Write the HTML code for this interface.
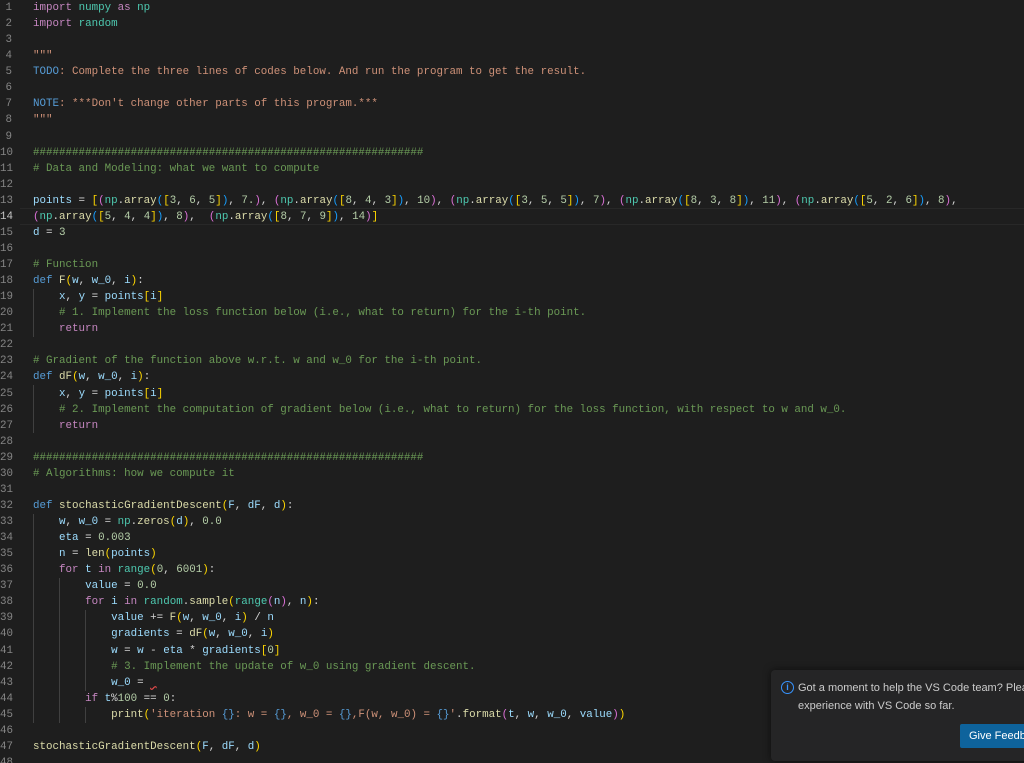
<!DOCTYPE html>
<html><head><meta charset="utf-8"><style>
html,body{margin:0;padding:0;background:#1e1e1e;width:1024px;height:763px;overflow:hidden;position:relative}
#wrap{position:absolute;left:0;top:0;width:1024px;height:763px;overflow:hidden}
pre{margin:0;font-family:"Liberation Mono",monospace;font-size:10.85px;line-height:16.07px;position:absolute;top:0}
#nums{left:0;width:12px;text-align:right;color:#858585}
#code{left:33px;color:#d4d4d4}
.k{color:#c586c0}.d{color:#569cd6}.m{color:#4ec9b0}.s{color:#ce9178}.c{color:#6a9955}.v{color:#9cdcfe}.f{color:#dcdcaa}.n{color:#b5cea8}
.y{color:#ffd700}.p{color:#da70d6}.b{color:#179fff}
.g{position:absolute;width:1px;background:#404040}
.cur{position:absolute;left:20px;right:0;top:208px;height:15px;border-top:1px solid #282828;border-bottom:1px solid #282828}
#tclip{position:absolute;left:760px;top:660px;width:264px;height:103px;overflow:hidden}
#toast{position:absolute;left:11px;top:10px;width:270px;height:91px;background:#252526;border-radius:4px;box-shadow:0 0 8px rgba(0,0,0,.6);font-family:"Liberation Sans",sans-serif;font-size:11px;color:#cccccc}
#toast .t{position:absolute;left:27px;top:9px;white-space:nowrap;line-height:18px}
#toast .ic{position:absolute;left:10px;top:11px;width:11px;height:11px;border:1px solid #3794ff;border-radius:50%;color:#3794ff;font-size:9px;text-align:center;line-height:11px;font-weight:bold}
#toast .btn{position:absolute;left:189px;top:54px;width:80px;height:24px;background:#0e639c;border-radius:2px;color:#fff;line-height:24px;padding-left:9px;white-space:nowrap}
</style></head><body><div id="wrap">
<div class="cur"></div>
<div class="g" style="left:33px;top:289px;height:48px"></div>
<div class="g" style="left:33px;top:385px;height:48px"></div>
<div class="g" style="left:33px;top:514px;height:209px"></div>
<div class="g" style="left:59px;top:578px;height:145px"></div>
<div class="g" style="left:85px;top:610px;height:81px"></div>
<div class="g" style="left:85px;top:707px;height:16px"></div>
<pre id="nums">1
2
3
4
5
6
7
8
9
10
11
12
13
<span style="color:#c6c6c6">14</span>
15
16
17
18
19
20
21
22
23
24
25
26
27
28
29
30
31
32
33
34
35
36
37
38
39
40
41
42
43
44
45
46
47
48</pre>
<pre id="code"><span class="k">import</span> <span class="m">numpy</span> <span class="k">as</span> <span class="m">np</span>
<span class="k">import</span> <span class="m">random</span>

<span class="s">"""</span>
<span class="d">TODO</span><span class="s">: Complete the three lines of codes below. And run the program to get the result.</span>

<span class="d">NOTE</span><span class="s">: ***Don't change other parts of this program.***</span>
<span class="s">"""</span>

<span class="c">############################################################</span>
<span class="c"># Data and Modeling: what we want to compute</span>

<span class="v">points</span> = <span class="y">[</span><span class="p">(</span><span class="m">np</span>.<span class="f">array</span><span class="b">(</span><span class="y">[</span><span class="n">3</span>, <span class="n">6</span>, <span class="n">5</span><span class="y">]</span><span class="b">)</span>, <span class="n">7.</span><span class="p">)</span>, <span class="p">(</span><span class="m">np</span>.<span class="f">array</span><span class="b">(</span><span class="y">[</span><span class="n">8</span>, <span class="n">4</span>, <span class="n">3</span><span class="y">]</span><span class="b">)</span>, <span class="n">10</span><span class="p">)</span>, <span class="p">(</span><span class="m">np</span>.<span class="f">array</span><span class="b">(</span><span class="y">[</span><span class="n">3</span>, <span class="n">5</span>, <span class="n">5</span><span class="y">]</span><span class="b">)</span>, <span class="n">7</span><span class="p">)</span>, <span class="p">(</span><span class="m">np</span>.<span class="f">array</span><span class="b">(</span><span class="y">[</span><span class="n">8</span>, <span class="n">3</span>, <span class="n">8</span><span class="y">]</span><span class="b">)</span>, <span class="n">11</span><span class="p">)</span>, <span class="p">(</span><span class="m">np</span>.<span class="f">array</span><span class="b">(</span><span class="y">[</span><span class="n">5</span>, <span class="n">2</span>, <span class="n">6</span><span class="y">]</span><span class="b">)</span>, <span class="n">8</span><span class="p">)</span>,
<span class="p">(</span><span class="m">np</span>.<span class="f">array</span><span class="b">(</span><span class="y">[</span><span class="n">5</span>, <span class="n">4</span>, <span class="n">4</span><span class="y">]</span><span class="b">)</span>, <span class="n">8</span><span class="p">)</span>,  <span class="p">(</span><span class="m">np</span>.<span class="f">array</span><span class="b">(</span><span class="y">[</span><span class="n">8</span>, <span class="n">7</span>, <span class="n">9</span><span class="y">]</span><span class="b">)</span>, <span class="n">14</span><span class="p">)</span><span class="y">]</span>
<span class="v">d</span> = <span class="n">3</span>

<span class="c"># Function</span>
<span class="d">def</span> <span class="f">F</span><span class="y">(</span><span class="v">w</span>, <span class="v">w_0</span>, <span class="v">i</span><span class="y">)</span>:
    <span class="v">x</span>, <span class="v">y</span> = <span class="v">points</span><span class="y">[</span><span class="v">i</span><span class="y">]</span>
    <span class="c"># 1. Implement the loss function below (i.e., what to return) for the i-th point.</span>
    <span class="k">return</span>

<span class="c"># Gradient of the function above w.r.t. w and w_0 for the i-th point.</span>
<span class="d">def</span> <span class="f">dF</span><span class="y">(</span><span class="v">w</span>, <span class="v">w_0</span>, <span class="v">i</span><span class="y">)</span>:
    <span class="v">x</span>, <span class="v">y</span> = <span class="v">points</span><span class="y">[</span><span class="v">i</span><span class="y">]</span>
    <span class="c"># 2. Implement the computation of gradient below (i.e., what to return) for the loss function, with respect to w and w_0.</span>
    <span class="k">return</span>

<span class="c">############################################################</span>
<span class="c"># Algorithms: how we compute it</span>

<span class="d">def</span> <span class="f">stochasticGradientDescent</span><span class="y">(</span><span class="v">F</span>, <span class="v">dF</span>, <span class="v">d</span><span class="y">)</span>:
    <span class="v">w</span>, <span class="v">w_0</span> = <span class="m">np</span>.<span class="f">zeros</span><span class="y">(</span><span class="v">d</span><span class="y">)</span>, <span class="n">0.0</span>
    <span class="v">eta</span> = <span class="n">0.003</span>
    <span class="v">n</span> = <span class="f">len</span><span class="y">(</span><span class="v">points</span><span class="y">)</span>
    <span class="k">for</span> <span class="v">t</span> <span class="k">in</span> <span class="m">range</span><span class="y">(</span><span class="n">0</span>, <span class="n">6001</span><span class="y">)</span>:
        <span class="v">value</span> = <span class="n">0.0</span>
        <span class="k">for</span> <span class="v">i</span> <span class="k">in</span> <span class="m">random</span>.<span class="f">sample</span><span class="y">(</span><span class="m">range</span><span class="p">(</span><span class="v">n</span><span class="p">)</span>, <span class="v">n</span><span class="y">)</span>:
            <span class="v">value</span> += <span class="f">F</span><span class="y">(</span><span class="v">w</span>, <span class="v">w_0</span>, <span class="v">i</span><span class="y">)</span> / <span class="v">n</span>
            <span class="v">gradients</span> = <span class="f">dF</span><span class="y">(</span><span class="v">w</span>, <span class="v">w_0</span>, <span class="v">i</span><span class="y">)</span>
            <span class="v">w</span> = <span class="v">w</span> - <span class="v">eta</span> * <span class="v">gradients</span><span class="y">[</span><span class="n">0</span><span class="y">]</span>
            <span class="c"># 3. Implement the update of w_0 using gradient descent.</span>
            <span class="v">w_0</span> = <span style="text-decoration:underline wavy #f14c4c"> </span>
        <span class="k">if</span> <span class="v">t</span>%<span class="n">100</span> == <span class="n">0</span>:
            <span class="f">print</span><span class="y">(</span><span class="s">'iteration </span><span class="d">{}</span><span class="s">: w = </span><span class="d">{}</span><span class="s">, w_0 = </span><span class="d">{}</span><span class="s">,F(w, w_0) = </span><span class="d">{}</span><span class="s">'</span>.<span class="f">format</span><span class="p">(</span><span class="v">t</span>, <span class="v">w</span>, <span class="v">w_0</span>, <span class="v">value</span><span class="p">)</span><span class="y">)</span>

<span class="f">stochasticGradientDescent</span><span class="y">(</span><span class="v">F</span>, <span class="v">dF</span>, <span class="v">d</span><span class="y">)</span>
</pre>
<div id="tclip"><div id="toast">
<div class="ic">i</div>
<div class="t">Got a moment to help the VS Code team? Please tell us about your<br>experience with VS Code so far.</div>
<div class="btn">Give Feedback</div>
</div></div>
</div></body></html>
